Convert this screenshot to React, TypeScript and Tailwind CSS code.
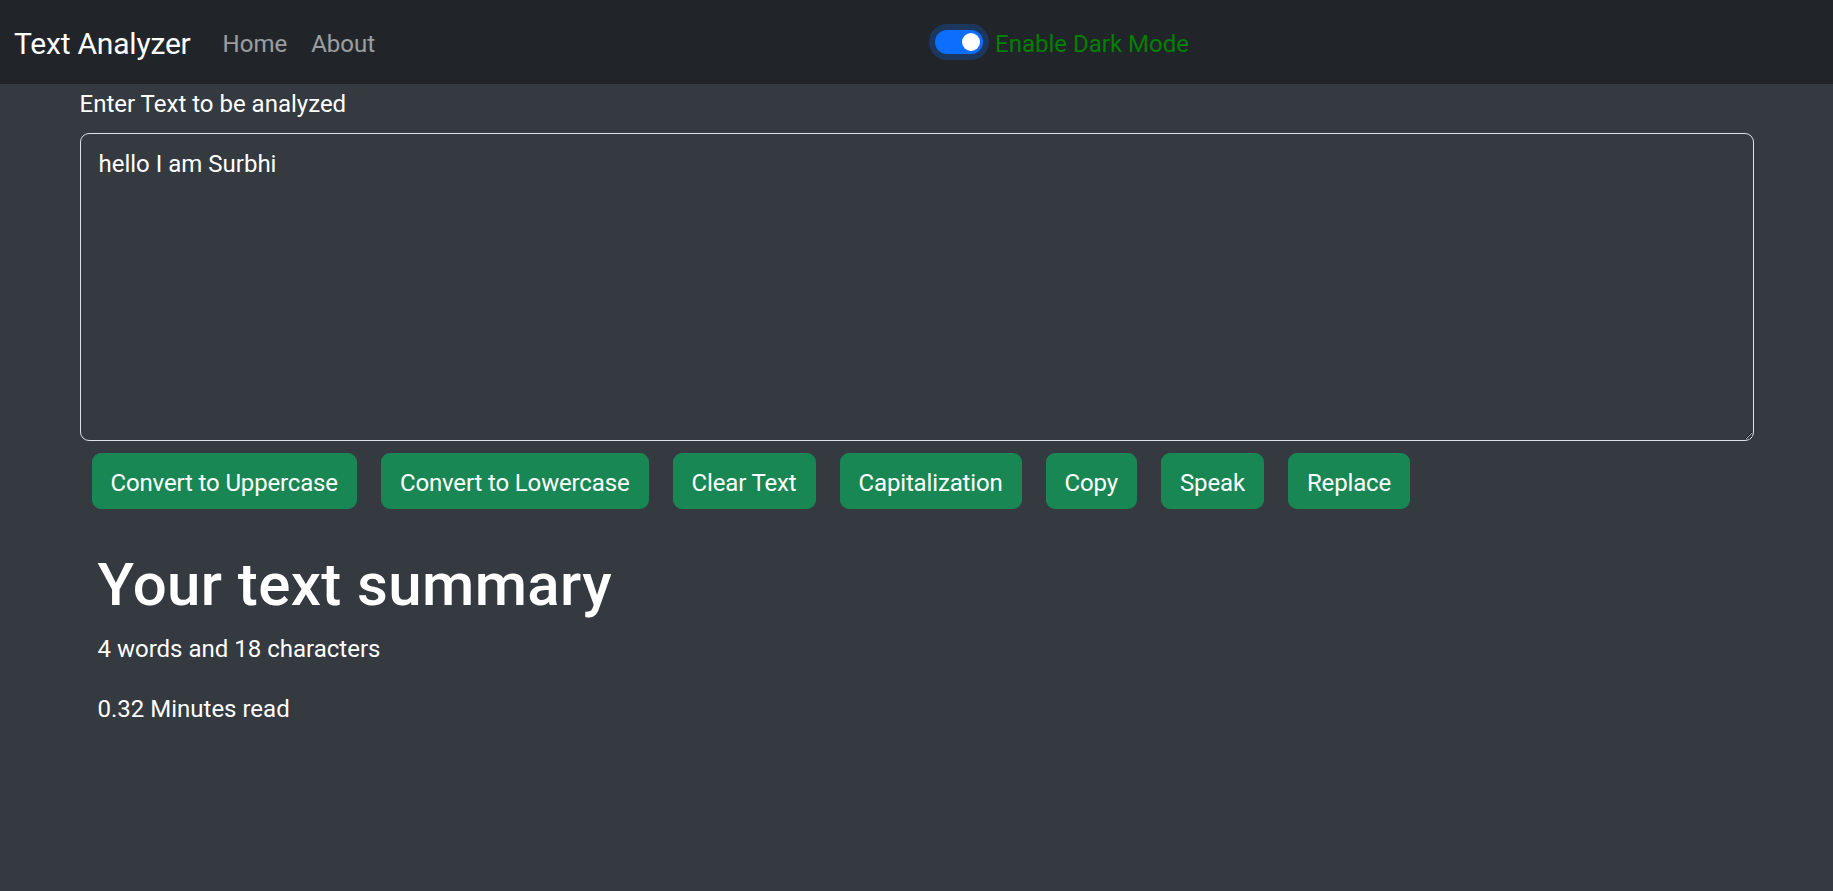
import { useState } from "react"

const font = { fontFamily: '"Segoe UI", Roboto, "Noto Sans", sans-serif' }

const actions = [
  "Convert to Uppercase",
  "Convert to Lowercase",
  "Clear Text",
  "Capitalization",
  "Copy",
  "Speak",
  "Replace",
]

function countWords(text: string) {
  return text.split(/\s+/).filter((w) => w.length > 0).length
}

export default function App() {
  const [text, setText] = useState("hello I am Surbhi")
  const [dark, setDark] = useState(true)

  const words = countWords(text)

  return (
    <div className="min-h-screen bg-[#343a40] text-white" style={font}>
      {/* Navbar */}
      <nav className="flex h-[84px] items-center bg-[#212529] pl-[14px]">
        <div className="flex w-[921px] shrink-0 items-center">
          <a className="mr-[20px] pt-[3px] text-[30px] leading-[45px] tracking-[-0.2px] text-white" href="#">
            Text Analyzer
          </a>
          <a className="px-[12px] pt-[3px] text-[24px] leading-[36px] text-white/55" href="#">
            Home
          </a>
          <a className="px-[12px] pt-[3px] text-[24px] leading-[36px] text-white/55" href="#">
            About
          </a>
        </div>
        <label className="flex cursor-pointer items-center">
          <button
            type="button"
            onClick={() => setDark(!dark)}
            className={`relative h-[24px] w-[48px] rounded-full shadow-[0_0_0_6px_rgba(13,110,253,0.25)] ${
              dark ? "bg-[#0d6efd]" : "bg-white"
            }`}
            aria-label="Enable Dark Mode"
          >
            <span
              className={`absolute top-[3px] h-[18px] w-[18px] rounded-full ${
                dark ? "right-[3px] bg-white" : "left-[3px] bg-[#86b7fe]"
              }`}
            />
          </button>
          <span className="ml-[12px] pt-[3px] text-[24px] leading-[36px] text-[#008000]">
            Enable Dark Mode
          </span>
        </label>
      </nav>

      {/* Form */}
      <div className="mx-auto w-full max-w-[1710px] px-[18px]">
        <label className="mb-[11px] block pt-[2px] text-[24px] leading-[36px]" htmlFor="box">
          Enter Text to be analyzed
        </label>
        <textarea
          id="box"
          value={text}
          onChange={(e) => setText(e.target.value)}
          spellCheck={false}
          className="block h-[308px] w-full resize-y rounded-[9px] border border-[#dee2e6] bg-[#343a40] px-[18px] pt-[12px] pb-[6px] text-[24px] leading-[36px] text-white outline-none"
          style={font}
        />
        <div className="flex flex-wrap">
          {actions.map((label) => (
            <button
              key={label}
              type="button"
              className="mx-[12px] my-[12px] rounded-[9px] border border-[#198754] bg-[#198754] px-[18px] pt-[11px] pb-[7px] text-[24px] leading-[36px] tracking-[-0.15px] text-white"
            >
              {label}
            </button>
          ))}
        </div>

        {/* Summary */}
        <div className="my-[24px] px-[18px]">
          <h1 className="mb-[10px] pt-[4px] text-[60px] font-medium leading-[72px] tracking-[0.4px]">
            Your text summary
          </h1>
          <p className="mb-[24px] text-[24px] leading-[36px]">
            {words} words and {text.length + 1} characters
          </p>
          <p className="mb-[24px] text-[24px] leading-[36px]">
            {(0.08 * words).toFixed(2)} Minutes read
          </p>
        </div>
      </div>
    </div>
  )
}
